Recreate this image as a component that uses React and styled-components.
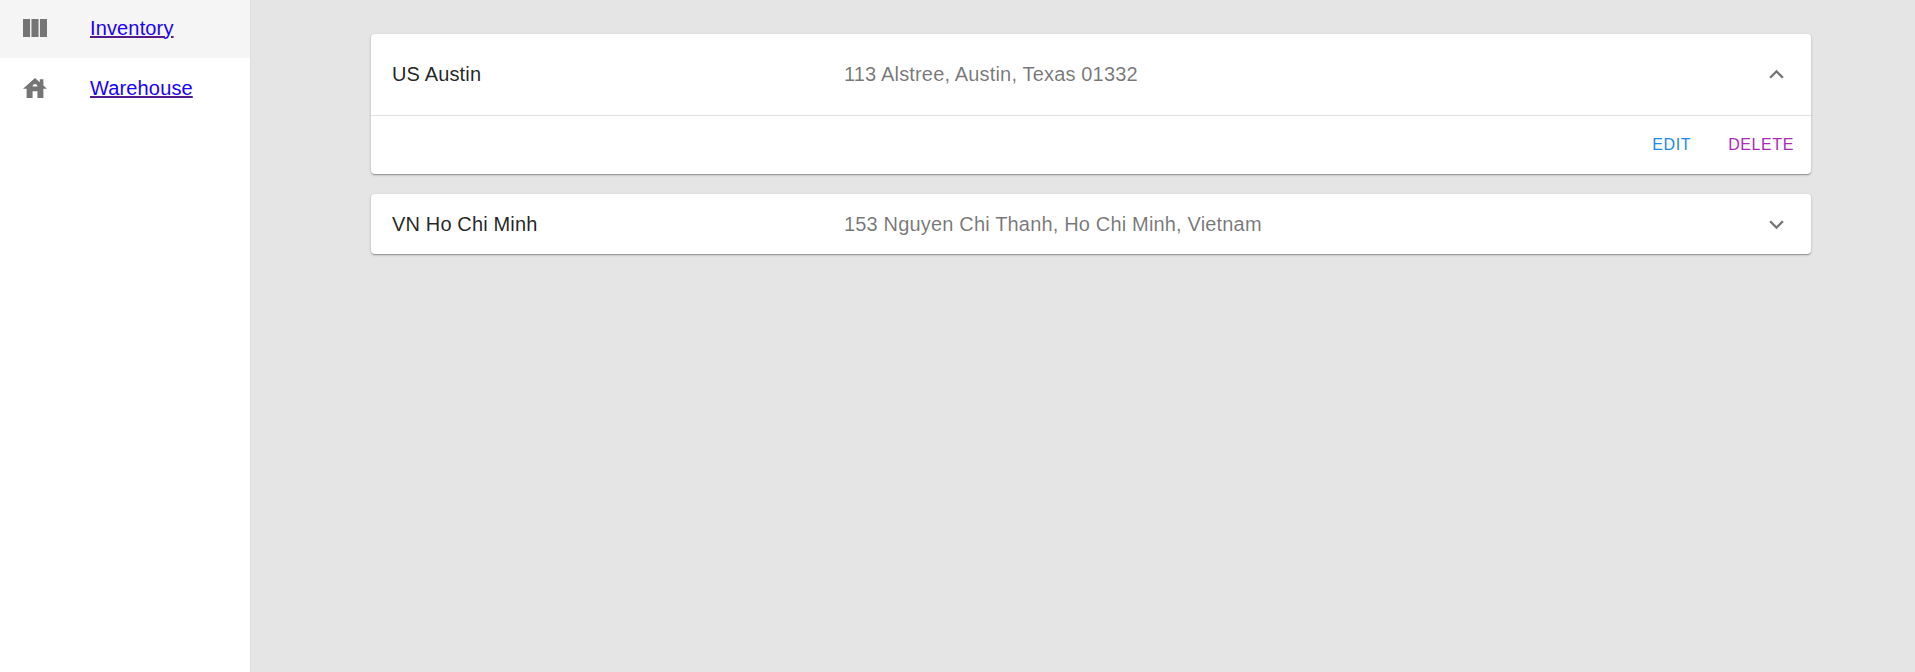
import React from 'react'
import styled, {createGlobalStyle} from 'styled-components'

const GlobalStyle = createGlobalStyle`
  html, body {
    margin: 0;
    height: 100%;
    font-family: "Liberation Sans", Arial, sans-serif;
  }
  #root {
    height: 100%;
  }
`

const Layout = styled.div`
  display: flex;
  height: 672px;
  background-color: #e5e5e5;
`

const Sidebar = styled.nav`
  box-sizing: border-box;
  width: 251px;
  flex-shrink: 0;
  background-color: #fff;
  border-right: 1px solid #dedede;
`

const NavItem = styled.div`
  box-sizing: border-box;
  display: flex;
  align-items: center;
  height: ${props => (props.$active ? '58px' : '60px')};
  padding: ${props => (props.$active ? '0 0 2px 23px' : '0 0 0 23px')};
  background-color: ${props => (props.$active ? '#f5f5f5' : 'transparent')};
`

const NavIcon = styled.svg`
  width: 24px;
  height: auto;
  margin-right: 43px;
  fill: #757575;
`

const NavLink = styled.a`
  font-size: 20px;
  letter-spacing: 0.14px;
  color: #1a00ff;
  text-decoration: underline;
  text-decoration-color: #551a8b;
  text-decoration-thickness: 2px;
`

const Main = styled.main`
  flex: 1;
  display: flex;
  flex-direction: column;
  gap: 20px;
  padding: 34px 104px 0 120px;
`

const Card = styled.section`
  background-color: #fff;
  border-radius: 4px;
  box-shadow: 0 1px 3px 0 rgba(0, 0, 0, 0.2), 0 1px 1px 0 rgba(0, 0, 0, 0.14), 0 2px 1px -1px rgba(0, 0, 0, 0.12);
`

const Summary = styled.div`
  display: flex;
  align-items: center;
  height: ${props => (props.$expanded ? '81px' : '60px')};
  padding: 0 20px 0 21px;
`

const Name = styled.div`
  width: 452px;
  font-size: 20px;
  letter-spacing: 0.15px;
  color: rgba(0, 0, 0, 0.87);
`

const Address = styled.div`
  flex: 1;
  font-size: 20px;
  letter-spacing: 0.17px;
  color: rgba(0, 0, 0, 0.54);
`

const Chevron = styled.svg`
  width: 29px;
  height: 29px;
  fill: #757575;
  transform: ${props => (props.$expanded ? 'rotate(180deg)' : 'none')};
`

const Actions = styled.div`
  display: flex;
  justify-content: flex-end;
  align-items: center;
  gap: 37px;
  height: 58px;
  padding-right: 17px;
  border-top: 1px solid #e0e0e0;
`

const ActionButton = styled.button`
  padding: 0;
  border: 0;
  background: none;
  font-family: inherit;
  font-size: 16px;
  letter-spacing: 0.6px;
  text-transform: uppercase;
  color: ${props => props.$color};
`

const ExpandIcon = ({expanded}) => (
    <Chevron $expanded={expanded} viewBox="0 0 24 24">
        <path d="M16.59 8.59L12 13.17 7.41 8.59 6 10l6 6 6-6z"/>
    </Chevron>
)

const App = () => {
    return (
        <>
            <GlobalStyle/>
            <Layout>
                <Sidebar>
                    <NavItem $active>
                        <NavIcon viewBox="4 5 17 13">
                            <path d="M10 18h5V5h-5v13zm-6 0h5V5H4v13zM16 5v13h5V5h-5z"/>
                        </NavIcon>
                        <NavLink href="#inventory">Inventory</NavLink>
                    </NavItem>
                    <NavItem>
                        <NavIcon viewBox="2 3 20 17">
                            <path d="M19 9.3V4h-3v2.6L12 3 2 12h3v8h5v-6h4v6h5v-8h3l-3-2.7zm-9 .7c0-1.1.9-2 2-2s2 .9 2 2h-4z"/>
                        </NavIcon>
                        <NavLink href="#warehouse">Warehouse</NavLink>
                    </NavItem>
                </Sidebar>
                <Main>
                    <Card>
                        <Summary $expanded>
                            <Name>US Austin</Name>
                            <Address>113 Alstree, Austin, Texas 01332</Address>
                            <ExpandIcon expanded/>
                        </Summary>
                        <Actions>
                            <ActionButton $color="#1e88e5">Edit</ActionButton>
                            <ActionButton $color="#ab29b8">Delete</ActionButton>
                        </Actions>
                    </Card>
                    <Card>
                        <Summary>
                            <Name>VN Ho Chi Minh</Name>
                            <Address>153 Nguyen Chi Thanh, Ho Chi Minh, Vietnam</Address>
                            <ExpandIcon/>
                        </Summary>
                    </Card>
                </Main>
            </Layout>
        </>
    )
}

export default App
